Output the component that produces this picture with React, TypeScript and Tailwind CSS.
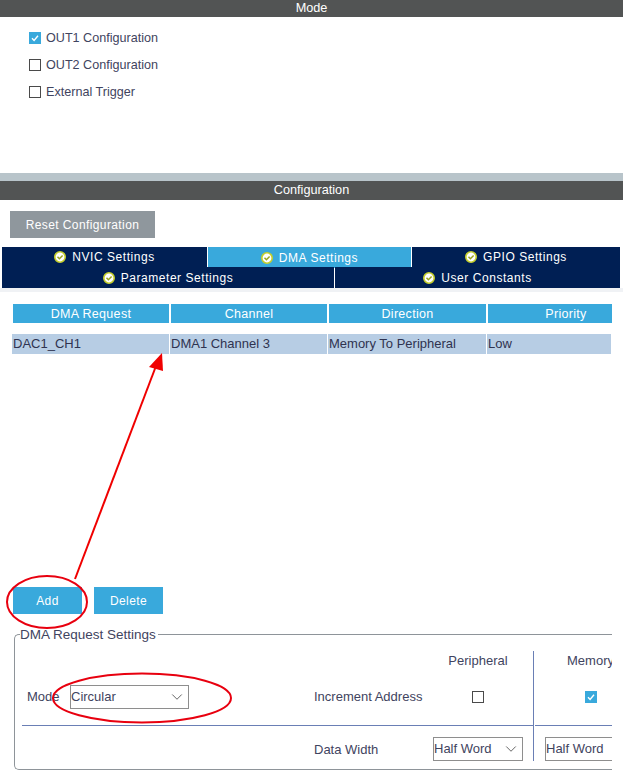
import { ChevronDown } from "lucide-react";

const font = "font-['Liberation_Sans',Arial,sans-serif]";

const StatusIcon = () => (
  <svg width="12" height="12" viewBox="0 0 12 12" className="shrink-0">
    <circle cx="6" cy="6" r="5.2" fill="#fff" stroke="#c5cf2c" strokeWidth="1.6" />
    <path d="M3.5 5.8 5.4 7.7 8.6 4.4" fill="none" stroke="#9aa51e" strokeWidth="1.5" />
  </svg>
);

const Checkbox = ({ checked = false }: { checked?: boolean }) =>
  checked ? (
    <span className="flex h-3 w-3 shrink-0 items-center justify-center bg-[#39a9dc]">
      <svg width="10" height="10" viewBox="0 0 10 10">
        <path d="M2 5.2 4.1 7.4 8 2.8" fill="none" stroke="#fff" strokeWidth="1.4" />
      </svg>
    </span>
  ) : (
    <span className="h-3 w-3 shrink-0 border border-[#4a4a4a] bg-white" />
  );

const TitleBar = ({ title, className }: { title: string; className: string }) => (
  <div className={`flex items-center justify-center bg-[#525454] text-[12.7px] text-white ${className}`}>{title}</div>
);

const Tab = ({ label, className }: { label: string; className: string }) => (
  <div className={`flex items-center justify-center gap-[6px] tracking-[0.55px] text-white ${className}`}>
    <StatusIcon />
    <span>{label}</span>
  </div>
);

const Select = ({ value, className }: { value: string; className: string }) => (
  <div className={`flex h-[24px] shrink-0 items-center justify-between border border-[#8e8e8e] pr-[2px] text-[#3f4460] ${className}`}>
    <span>{value}</span>
    <ChevronDown size={18} strokeWidth={1.2} className="text-[#555]" />
  </div>
);

const columns = [
  { title: "DMA Request", cell: "DAC1_CH1", width: "w-[156px]", cellWidth: "w-[157px]", extra: "" },
  { title: "Channel", cell: "DMA1 Channel 3", width: "w-[156px]", cellWidth: "w-[157px]", extra: "" },
  { title: "Direction", cell: "Memory To Peripheral", width: "w-[157px]", cellWidth: "w-[158px]", extra: "" },
  { title: "Priority", cell: "Low", width: "w-[124px]", cellWidth: "w-[124px]", extra: "pl-[32px]" },
];

export default function App() {
  return (
    <div className={`relative h-[782px] w-[623px] overflow-hidden bg-white text-[12px] ${font}`}>
      <TitleBar title="Mode" className="h-[17px]" />

      <div className="flex h-[156px] flex-col gap-[11px] pl-[29px] pt-[13px] text-[12.6px] text-[#3f4460]">
        {["OUT1 Configuration", "OUT2 Configuration", "External Trigger"].map((label, i) => (
          <label key={label} className="flex h-4 items-center gap-[5px]">
            <Checkbox checked={i === 0} />
            <span>{label}</span>
          </label>
        ))}
      </div>

      <div className="h-2 bg-[#b8c4ca]" />
      <TitleBar title="Configuration" className="h-[19px] pt-px" />

      <div className="pl-[10px] pt-[11px]">
        <button className="flex h-[27px] w-[145px] items-center justify-center bg-[#8f979d] tracking-[0.4px] text-white">
          Reset Configuration
        </button>
      </div>

      <div className="mt-[9px] pl-[2px] pr-[3px]">
        <div className="flex h-[20px] gap-px">
          <Tab label="NVIC Settings" className="w-[205px] bg-[#001f54]" />
          <Tab label="DMA Settings" className="h-[21px] w-[203px] bg-[#39a9dc]" />
          <Tab label="GPIO Settings" className="flex-1 bg-[#001f54]" />
        </div>
        <div className="flex h-[21px] gap-px">
          <Tab label="Parameter Settings" className="w-[332px] bg-[#001f54]" />
          <Tab label="User Constants" className="flex-1 bg-[#001f54]" />
        </div>
      </div>

      <div className="h-[4px] bg-[#f0f2f5]" />

      <div className="pl-[13px] pt-[12px]">
        <div className="flex gap-[2px] pr-[11px]">
          {columns.map((c) => (
            <div key={c.title} className={`flex h-[19px] items-center justify-center bg-[#39a9dc] pt-px text-[12.5px] tracking-[0.3px] text-white ${c.width} ${c.extra}`}>
              {c.title}
            </div>
          ))}
        </div>
        <div className="ml-[-1px] mt-[11px] flex h-[20px] gap-px text-[13px]">
          {columns.map((c) => (
            <div key={c.title} className={`flex items-center bg-[#b7cde4] pl-px text-[#2f3350] ${c.cellWidth}`}>
              {c.cell}
            </div>
          ))}
        </div>
      </div>

      <div className="flex gap-3 pl-[13px] pt-[233px]">
        <button className="flex h-[27px] w-[69px] items-center justify-center bg-[#39a9dc] tracking-[0.4px] text-white">Add</button>
        <button className="flex h-[27px] w-[69px] items-center justify-center bg-[#39a9dc] tracking-[0.4px] text-white">Delete</button>
      </div>

      <div className="relative ml-[14px] mt-[20px] h-[136px] w-[598px] rounded-l-[5px] border-y border-l border-[#8e9499]">
        <span className="absolute left-[5px] top-[-8px] bg-white pr-[2px] text-[13.5px] leading-4 text-[#3f4460]">DMA Request Settings</span>

        <div className="ml-[7px] h-[126px] overflow-hidden pt-[16px] text-[13px] text-[#3f4460]">
          <div className="flex h-[24px]">
            <div className="w-[401px] shrink-0" />
            <div className="flex w-[110px] shrink-0 items-start justify-center">Peripheral</div>
            <div className="flex h-full w-[114px] shrink-0 items-start justify-center border-l border-[#6a7fb5]">Memory</div>
          </div>
          <div className="flex h-[51px]">
            <div className="flex w-[511px] shrink-0 items-center border-b border-[#6a7fb5] pb-[7px]">
              <div className="flex w-[292px] shrink-0 items-center">
                <span className="ml-[5px] w-[43px]">Mode</span>
                <Select value="Circular" className="w-[119px]" />
              </div>
              <div className="w-[119px] shrink-0">Increment Address</div>
              <div className="flex w-[100px] shrink-0 justify-center pr-[10px]">
                <Checkbox />
              </div>
            </div>
            <div className="h-full w-[114px] shrink-0 border-l border-[#6a7fb5]">
              <div className="ml-px flex h-full items-center justify-center border-b border-[#6a7fb5] pb-[7px] pr-px">
                <Checkbox checked />
              </div>
            </div>
          </div>
          <div className="flex h-[35px] items-end">
            <div className="ml-[292px] w-[119px] shrink-0 self-center pt-[13px]">Data Width</div>
            <Select value="Half Word" className="w-[90px]" />
            <div className="ml-[10px] flex h-full w-[114px] shrink-0 items-end border-l border-[#6a7fb5] pl-[11px]">
              <Select value="Half Word" className="w-[90px]" />
            </div>
          </div>
        </div>
      </div>

      <svg className="pointer-events-none absolute left-0 top-0" width="623" height="782" fill="none">
        <path d="M75 579 156 366" stroke="#f00000" strokeWidth="2" />
        <path d="M162 353 149 367 163 371Z" fill="#f00000" />
        <ellipse cx="47" cy="602" rx="40" ry="26" stroke="#e8000f" strokeWidth="2" />
        <ellipse cx="142" cy="698" rx="89" ry="24.5" stroke="#e8000f" strokeWidth="2" />
      </svg>
    </div>
  );
}
